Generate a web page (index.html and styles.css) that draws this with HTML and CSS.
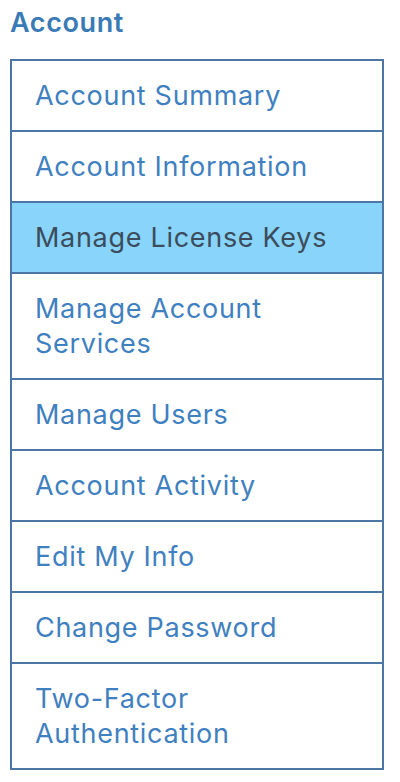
FILE: index.html
```html
<!DOCTYPE html>
<html lang="en">
<head>
<meta charset="utf-8">
<title>Account</title>
<link rel="stylesheet" href="styles.css">
</head>
<body>
<main class="page">
  <h2 class="heading">Account</h2>
  <nav class="menu">
    <a class="item" href="#">Account Summary</a>
    <a class="item" href="#">Account Information</a>
    <a class="item active" href="#">Manage License Keys</a>
    <a class="item" href="#">Manage Account Services</a>
    <a class="item" href="#">Manage Users</a>
    <a class="item" href="#">Account Activity</a>
    <a class="item" href="#">Edit My Info</a>
    <a class="item" href="#">Change Password</a>
    <a class="item" href="#">Two-Factor Authentication</a>
  </nav>
</main>
</body>
</html>
```
FILE: styles.css
```css
html, body {
  margin: 0;
  padding: 0;
  background: #ffffff;
}
body {
  font-family: "Inter", "Open Sans", sans-serif;
}
.page {
  padding: 7px 16px 0 10px;
}
.heading {
  margin: 0 0 20px 0;
  font-size: 27px;
  line-height: 32px;
  font-weight: 600;
  color: #3a7bb6;
  letter-spacing: 0.6px;
}
.menu {
  display: flex;
  flex-direction: column;
  border: 2px solid #4b76a6;
  border-bottom: none;
}
.item {
  display: block;
  padding: 17px 24px 17px 23px;
  font-size: 27px;
  line-height: 35px;
  letter-spacing: 0.7px;
  color: #3f80c0;
  text-decoration: none;
  border-bottom: 2px solid #4b76a6;
}
.item.active {
  background: #88d4fa;
  color: #3c4c5c;
}
```
